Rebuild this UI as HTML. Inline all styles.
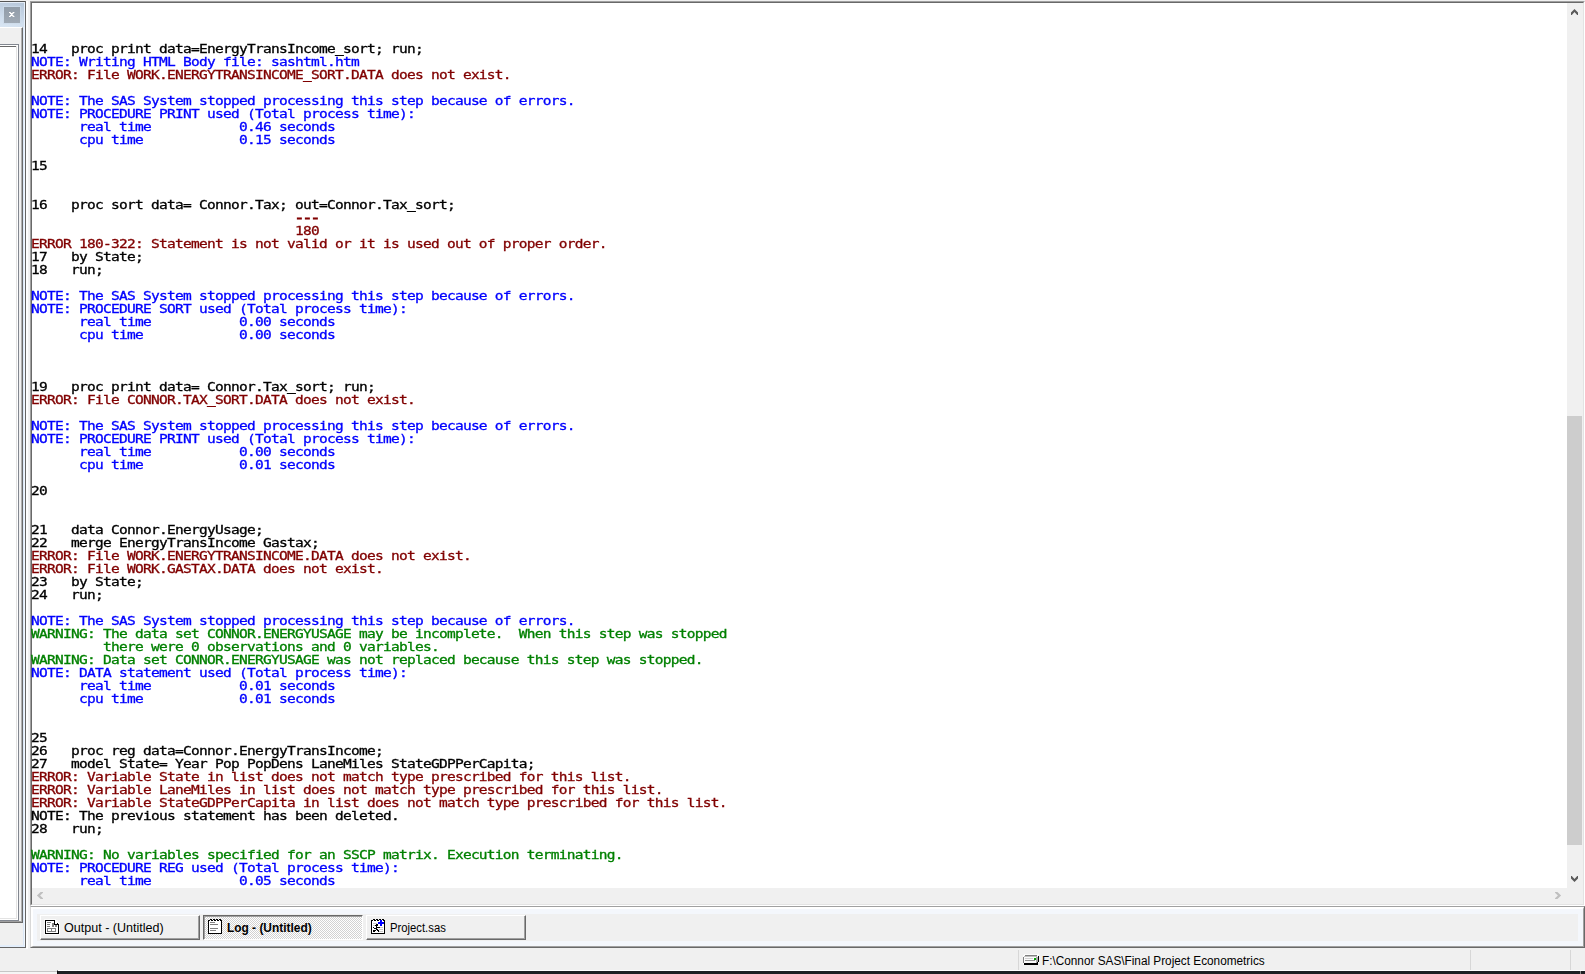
<!DOCTYPE html>
<html lang="en">
<head>
<meta charset="utf-8">
<title>SAS - Log</title>
<style>
*{box-sizing:border-box;margin:0;padding:0}
html,body{width:1585px;height:974px;overflow:hidden;background:#f0f0f0}
body{position:relative;font-family:"Liberation Sans",sans-serif;font-size:12px;color:#000}
.abs{position:absolute}
/* ---------- left docked panel ---------- */
#lp-head{left:0;top:2px;width:25px;height:25px;background:linear-gradient(195deg,#b7c7da 0,#c3d2e3 35%,#d1dfee 70%,#d9e6f3 100%);border-top:1px solid #e4edf8;border-right:1px solid #e9f1fb}
#lp-close{left:4px;top:7px;width:16px;height:16px;background:linear-gradient(#919ca8,#a0aab5);box-shadow:0 0 0 1px rgba(205,219,234,.7)}
#lp-edge{left:25px;top:1px;width:1px;height:947px;background:#646464}
#lp-edge-b{left:0;top:947px;width:26px;height:1px;background:#646464}
#lp-blue{left:23px;top:27px;width:2px;height:920px;background:linear-gradient(90deg,#dbe8f7 0 50%,#f2f7fd 50% 100%)}
#lp-blue-b{left:0;top:945px;width:25px;height:2px;background:#e3eefb}
#lp-top{left:0;top:1px;width:26px;height:1px;background:#555}
#lp-gap{left:26px;top:1px;width:2px;height:948px;background:#fdfdfd}
#lp-frame{left:-4px;top:27px;width:27px;height:896px;border-top:1px solid #fff;border-right:1px solid #696969;border-bottom:1px solid #696969;background:#f0f0f0}
#lp-frame2{left:-4px;top:28px;width:26px;height:894px;border-right:1px solid #b0b0b0;border-bottom:1px solid #a0a0a0}
#lp-list{left:-4px;top:44px;width:23px;height:877px;border:1px solid #828790;background:#fff}
#lp-list i{position:absolute;left:0;top:1px;width:19px;height:1px;background:#696969}
#lp-list b{position:absolute;left:19px;top:1px;width:1px;height:873px;background:#e3e3e3}
#lp-list u{position:absolute;left:0;top:873px;width:20px;height:1px;background:#e3e3e3}
/* ---------- main log pane ---------- */
#pane{left:30px;top:1px;width:1555px;height:905px;background:#fff;border-top:1px solid #a0a0a0;border-left:1px solid #a0a0a0;border-right:1px solid #fff;border-bottom:1px solid #fff}
#pane-in{left:0;top:0;width:1553px;height:903px;border-top:1px solid #696969;border-left:1px solid #696969;border-right:1px solid #e3e3e3;border-bottom:1px solid #e3e3e3}
#vs{left:1567px;top:3px;width:16px;height:885px;background:#f0f0f0}
#vs-thumb{left:1567px;top:416px;width:15px;height:429px;background:#cdcdcd}
#hs{left:32px;top:888px;width:1551px;height:16px;background:#f0f0f0}
svg.abs{overflow:visible}
/* ---------- log text ---------- */
#log{left:31.2px;top:43px;white-space:pre;font-family:"DejaVu Sans Mono","Liberation Mono",monospace;font-size:12.3px;line-height:13px;color:#000;transform:scaleX(1.1800);transform-origin:0 0;letter-spacing:-0.6256px;-webkit-text-stroke:0.3px currentColor;will-change:transform}
#log .n{color:#0000ff}
#log .e{color:#800000}
#log .w{color:#008000}
#log .d{-webkit-text-stroke:1.1px currentColor}
/* ---------- window bar ---------- */
#wb{left:30px;top:906px;width:1555px;height:42px;background:#f4f7fc;border-top:1px solid #a0a0a0;border-left:1px solid #d8d8d8;border-right:1px solid #696969;border-bottom:1px solid #696969}
#wb-hi{left:31px;top:907px;width:1553px;height:40px;border-top:2px solid #fff;border-left:2px solid #fff;border-right:1px solid #a0a0a0;border-bottom:1px solid #a0a0a0}
#wb-in{left:37px;top:914px;width:1541px;height:27px;background:#f0f0f0}
.tab{height:25px;top:915px;background:#f0f0f0;border-top:1px solid #fff;border-left:1px solid #fff;border-right:1px solid #696969;border-bottom:1px solid #696969;box-shadow:inset -1px -1px 0 #a0a0a0}
.tab.on{border-color:#696969 #fff #fff #696969;box-shadow:inset 1px 1px 0 #a0a0a0;background:repeating-conic-gradient(#ffffff 0 25%,#d2d2d2 0 50%) 0 0/2px 2px}
.tab span{position:absolute;top:4px;white-space:nowrap;font-size:12px;line-height:16px;transform-origin:0 50%}
.tab.on span{font-weight:bold}
/* ---------- status bar ---------- */
.sep{top:950px;width:1px;height:20px;background:#d7d7d7}
#st-text{left:1042px;top:953px;font-size:12px;line-height:16px;white-space:nowrap;transform-origin:0 50%}
#bot-l{left:0;top:971px;width:57px;height:3px;background:#f5f5f5;border-top:1px solid #c6c6c6}
#bot-r{left:57px;top:970px;width:1528px;height:4px;background:#1e2023;border-top:1px solid #fff;border-left:1px solid #0c0d0f}
</style>
</head>
<body>
<!-- left docked panel -->
<div class="abs" id="lp-gap"></div>
<div class="abs" id="lp-top"></div>
<div class="abs" id="lp-head"></div>
<div class="abs" id="lp-close"></div>
<svg class="abs" style="left:8.8px;top:12px" width="5.4" height="5" viewBox="0 0 6 5" preserveAspectRatio="none"><path d="M0 0h2v1H0zM4 0h2v1H4zM1 1h4v1H1zM2 2h2v1H2zM1 3h4v1H1zM0 4h2v1H0zM4 4h2v1H4z" fill="#fff"/></svg>
<div class="abs" id="lp-blue"></div>
<div class="abs" id="lp-blue-b"></div>
<div class="abs" id="lp-frame"></div>
<div class="abs" id="lp-frame2"></div>
<div class="abs" id="lp-list"><i></i><b></b><u></u></div>
<div class="abs" id="lp-edge"></div>
<div class="abs" id="lp-edge-b"></div>

<!-- main pane -->
<div class="abs" id="pane"><div class="abs" id="pane-in"></div></div>
<div class="abs" id="vs"></div>
<div class="abs" id="vs-thumb"></div>
<div class="abs" id="hs"></div>

<svg class="abs" style="left:1571px;top:9px" width="7" height="6" viewBox="0 0 7 6"><path d="M0 6 L0.8 6 L3.5 3.1 L6.2 6 L7 6 L7 3.6 L3.5 -0.1 L0 3.6Z" fill="#5a5a5a"/></svg>
<svg class="abs" style="left:1571px;top:876px" width="7" height="6" viewBox="0 0 7 6"><path d="M0 0 L0.8 0 L3.5 2.9 L6.2 0 L7 0 L7 2.4 L3.5 6.1 L0 2.4Z" fill="#5a5a5a"/></svg>
<svg class="abs" style="left:37px;top:892px" width="6" height="7" viewBox="0 0 6 7"><path d="M6 0 L6 0.8 L3.1 3.5 L6 6.2 L6 7 L3.6 7 L-0.1 3.5 L3.6 0Z" fill="#bfbfbf"/></svg>
<svg class="abs" style="left:1555px;top:892px" width="6" height="7" viewBox="0 0 6 7"><path d="M0 0 L0 0.8 L2.9 3.5 L0 6.2 L0 7 L2.4 7 L6.1 3.5 L2.4 0Z" fill="#bfbfbf"/></svg>

<pre class="abs" id="log">14   proc print data=EnergyTransIncome_sort; run;
<span class="n">NOTE: Writing HTML Body file: sashtml.htm</span>
<span class="e">ERROR: File WORK.ENERGYTRANSINCOME_SORT.DATA does not exist.</span>

<span class="n">NOTE: The SAS System stopped processing this step because of errors.</span>
<span class="n">NOTE: PROCEDURE PRINT used (Total process time):</span>
<span class="n">      real time           0.46 seconds</span>
<span class="n">      cpu time            0.15 seconds</span>

15


16   proc sort data= Connor.Tax; out=Connor.Tax_sort;
<span class="e d">                                 ---</span>
<span class="e">                                 180</span>
<span class="e">ERROR 180-322: Statement is not valid or it is used out of proper order.</span>
17   by State;
18   run;

<span class="n">NOTE: The SAS System stopped processing this step because of errors.</span>
<span class="n">NOTE: PROCEDURE SORT used (Total process time):</span>
<span class="n">      real time           0.00 seconds</span>
<span class="n">      cpu time            0.00 seconds</span>



19   proc print data= Connor.Tax_sort; run;
<span class="e">ERROR: File CONNOR.TAX_SORT.DATA does not exist.</span>

<span class="n">NOTE: The SAS System stopped processing this step because of errors.</span>
<span class="n">NOTE: PROCEDURE PRINT used (Total process time):</span>
<span class="n">      real time           0.00 seconds</span>
<span class="n">      cpu time            0.01 seconds</span>

20


21   data Connor.EnergyUsage;
22   merge EnergyTransIncome Gastax;
<span class="e">ERROR: File WORK.ENERGYTRANSINCOME.DATA does not exist.</span>
<span class="e">ERROR: File WORK.GASTAX.DATA does not exist.</span>
23   by State;
24   run;

<span class="n">NOTE: The SAS System stopped processing this step because of errors.</span>
<span class="w">WARNING: The data set CONNOR.ENERGYUSAGE may be incomplete.  When this step was stopped</span>
<span class="w">         there were 0 observations and 0 variables.</span>
<span class="w">WARNING: Data set CONNOR.ENERGYUSAGE was not replaced because this step was stopped.</span>
<span class="n">NOTE: DATA statement used (Total process time):</span>
<span class="n">      real time           0.01 seconds</span>
<span class="n">      cpu time            0.01 seconds</span>


25
26   proc reg data=Connor.EnergyTransIncome;
27   model State= Year Pop PopDens LaneMiles StateGDPPerCapita;
<span class="e">ERROR: Variable State in list does not match type prescribed for this list.</span>
<span class="e">ERROR: Variable LaneMiles in list does not match type prescribed for this list.</span>
<span class="e">ERROR: Variable StateGDPPerCapita in list does not match type prescribed for this list.</span>
NOTE: The previous statement has been deleted.
28   run;

<span class="w">WARNING: No variables specified for an SSCP matrix. Execution terminating.</span>
<span class="n">NOTE: PROCEDURE REG used (Total process time):</span>
<span class="n">      real time           0.05 seconds</span></pre>

<!-- window bar -->
<div class="abs" id="wb"></div>
<div class="abs" id="wb-hi"></div>
<div class="abs" id="wb-in"></div>
<div class="abs tab" style="left:40px;width:160px"><span style="left:22.5px;transform:scaleX(1.045)">Output - (Untitled)</span></div>
<svg class="abs" style="left:44px;top:919px" width="16" height="16" viewBox="0 0 16 16" shape-rendering="crispEdges"><path d="M0 0H11L16 5V16H0Z" fill="#fff" opacity=".75"/><path d="M1.5 1.5H10.5L14.5 5.5V14.5H1.5Z" fill="#fff" stroke="#000" stroke-width="1"/><path d="M10 1V5H14" fill="none" stroke="#000" stroke-width="1"/><path d="M11 2h1v1h1v1h-2z" fill="#fff"/><path d="M3 3h4v1H3zM3 5h3v1H3zM3 7h3v1H3zM8 4h2v4H8zM11 6h2v2h-2z" fill="#808080"/><path d="M3.5 9.5h8v3h-8zM7.5 9.5v3" fill="none" stroke="#808080" stroke-width="1"/></svg>
<div class="abs tab on" style="left:203px;width:160px"><span style="left:22.5px;transform:scaleX(0.992)">Log - (Untitled)</span></div>
<svg class="abs" style="left:207px;top:918px" width="16" height="16" viewBox="0 0 16 16" shape-rendering="crispEdges"><path d="M1.5 2.5H14.5V15.5H1.5Z" fill="#fff" stroke="#000" stroke-width="1"/><path d="M2 2h12v1H2z" fill="#fff"/><path d="M2 2h1v1H2zM3 1h2v1h1v1H4V2H3zM6 1h2v1h1v1H7V2H6zM9 1h2v1h1v1h-2V2H9zM12 1h2v1h1v1h-2V2h-1z" fill="#000"/><path d="M3 4h5v1H3zM3 6h8v1H3zM3 10h8v1H3zM3 12h6v1H3z" fill="#808080"/></svg>
<div class="abs tab" style="left:366px;width:160px"><span style="left:22.5px;transform:scaleX(0.94)">Project.sas</span></div>
<svg class="abs" style="left:370px;top:918px" width="16" height="16" viewBox="0 0 16 16" shape-rendering="crispEdges"><path d="M1.5 2.5H14.5V15.5H1.5Z" fill="#fff" stroke="#000" stroke-width="1"/><path d="M2 2h12v1H2z" fill="#fff"/><path d="M2 2h1v1H2zM3 1h2v1h1v1H4V2H3zM6 1h2v1h1v1H7V2H6zM9 1h2v1h1v1h-2V2H9zM12 1h2v1h1v1h-2V2h-1z" fill="#000"/><path d="M3 5h4v1H3zM3 7h3v1H3zM9 9h4v1H9zM9 11h4v1H9zM9 13h4v1H9z" fill="#c8c8c8"/><path d="M6 6h2v2H7v1h3v1H7v1h1v1h1v2H8v-1H7v-1H6v1H5v1H3v-2h2v-1H4v-1H3v-1h1v1h2V8H5V7h1z" fill="#000"/><path d="M5 11h1v1H5z" fill="#fff"/><path d="M10 2h2v2h2v2h-2v2h-2V6H8V4h2z" fill="#0000ff"/></svg>

<!-- status bar -->
<div class="abs sep" style="left:1018px"></div>
<div class="abs sep" style="left:1470px"></div>
<div class="abs sep" style="left:1570px"></div>
<svg class="abs" style="left:1022px;top:954px" width="18" height="11" viewBox="0 0 18 11" shape-rendering="crispEdges"><path d="M2 0H17V8L15 11H1V2Z" fill="#fff" opacity=".8"/><path d="M3 1h12v1H3z" fill="#808080"/><path d="M2 2h13v1H2z" fill="#c0c0c0"/><path d="M1 3h1v6H1z" fill="#808080"/><path d="M2 3h12v6H2z" fill="#fafafa"/><path d="M3 4h8v1H3z" fill="#d0d0d0"/><path d="M3 6h10v1H3z" fill="#909090"/><path d="M12 4h1.5v1.5H12z" fill="#00a000"/><path d="M14 3h2v6h-2z" fill="#a8a8a8"/><path d="M16 2h1v6h-1zM15 8h1v1h-1zM2 9h14v1.5H2z" fill="#000"/></svg>
<div class="abs" id="st-text" style="transform:scaleX(0.982)">F:\Connor SAS\Final Project Econometrics</div>
<div class="abs" id="bot-l"></div>
<div class="abs" id="bot-r"></div>
<div class="abs" style="left:1580px;top:971px;width:1px;height:3px;background:#8a8a8a"></div>
</body>
</html>
